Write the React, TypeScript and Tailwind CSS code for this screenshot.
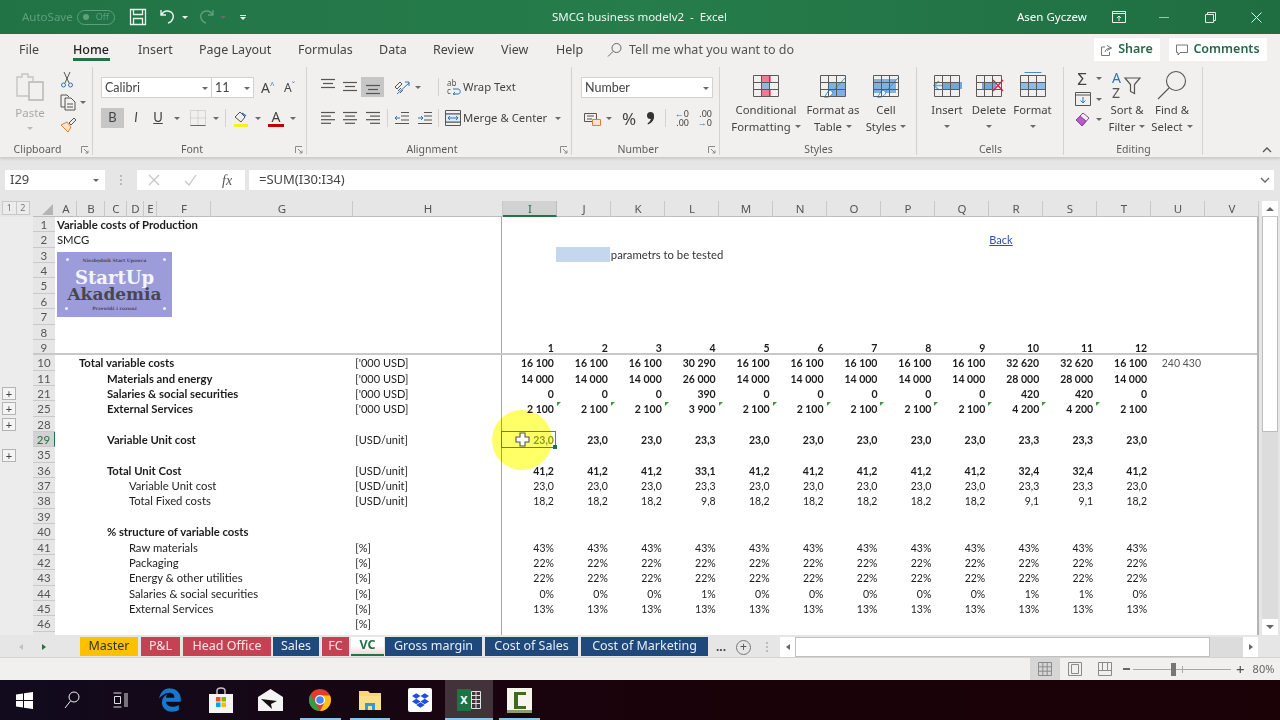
import clsx from "clsx"
import { FaEdgeLegacy, FaDropbox } from "react-icons/fa"

const ui = "font-['Noto_Sans',sans-serif]"
const calibri = "font-['Lato',sans-serif]"

function Caret({ className }: { className?: string }) {
  return (
    <span
      className={clsx(
        "inline-block h-0 w-0 border-x-[3px] border-t-[3px] border-x-transparent border-t-[#6a6a6a]",
        className
      )}
    />
  )
}

function Launcher() {
  return (
    <svg width="8" height="8" viewBox="0 0 8 8" className="absolute right-[4px] top-[6px]" fill="none" stroke="#8a8a8a">
      <path d="M.5 7V.5H7M3 3l4 4M4.5 7H7V4.5" />
    </svg>
  )
}

function Group({ className, label, launcher, labelPad, children }: { className: string; label: string; launcher?: boolean; labelPad?: string; children: React.ReactNode }) {
  return (
    <div className={clsx("relative flex flex-col", className)}>
      <div className="h-[75px]">{children}</div>
      <div className={clsx("relative flex h-[17px] items-center justify-center pt-[2px] text-[10.5px] text-[#5c5c5c]", labelPad)}>
        {label}
        {launcher && <Launcher />}
      </div>
      <div className="absolute bottom-[2px] right-0 top-[2px] w-px bg-[#d4d3d1]" />
    </div>
  )
}

function Lines({ w }: { w: number[] }) {
  return (
    <svg width="16" height="12" viewBox="0 0 16 12" stroke="#555" strokeWidth="1.2">
      {w.map((l, i) => (
        <path key={i} d={`M${(16 - l) / 2} ${1.5 + i * 4}h${l}`} />
      ))}
    </svg>
  )
}

function Align({ kind }: { kind: "left" | "center" | "right" }) {
  const ws = [14, 10, 14, 10]
  return (
    <svg width="16" height="14" viewBox="0 0 16 14" stroke="#555" strokeWidth="1.2">
      {ws.map((l, i) => {
        const x = kind === "left" ? 1 : kind === "right" ? 15 - l : (16 - l) / 2
        return <path key={i} d={`M${x} ${1.5 + i * 3.6}h${l}`} />
      })}
    </svg>
  )
}

function SheetGrid({ children }: { children?: React.ReactNode }) {
  return (
    <svg width="30" height="26" viewBox="0 0 30 26" fill="none">
      {children}
      <path d="M2.5 3.5h25v21h-25zM2.5 10.5h25M2.5 17.5h25M10.5 3.5v21M18.5 3.5v21" stroke="#5a5a5a" />
    </svg>
  )
}

function BigButton({ className, lines, caret, icon }: { className: string; lines: string[]; caret?: boolean; icon: React.ReactNode }) {
  return (
    <div className={clsx("flex flex-col items-center pt-[7px]", className)}>
      <div className="flex h-[26px] items-center">{icon}</div>
      <div className="mt-[3px] flex flex-col items-center whitespace-nowrap text-[11.3px] leading-[17px] text-[#444]">
        {lines.map((l, i) => (
          <span key={i} className="flex items-center gap-[4px]">
            {l}
            {caret && i === lines.length - 1 && <Caret />}
          </span>
        ))}
        {lines.length === 1 && <Caret className="mt-[7px]" />}
      </div>
    </div>
  )
}

function TitleBar() {
  return (
    <div className="relative flex h-[34px] items-center bg-gradient-to-r from-[#217346] via-[#267c4b] to-[#1f6e42] text-white">
      <span className="ml-[22px] w-[55px] shrink-0 text-[11.5px] text-[#5f9f7e]">AutoSave</span>
      <span className="flex h-[15px] w-[38px] shrink-0 items-center justify-between rounded-full border border-[#5f9f7e] px-[5px] text-[9px] text-[#5f9f7e]">
        <span className="h-[6px] w-[6px] rounded-full bg-[#5f9f7e]" />
        Off
      </span>
      <svg className="ml-[14px] shrink-0" width="18" height="18" viewBox="0 0 18 18" fill="none" stroke="#eaf3ee" strokeWidth="1.3">
        <path d="M1.5 1.5h15v15h-15zM4.5 1.5v5h9v-5M4.5 16.5v-6h9v6" />
      </svg>
      <svg className="ml-[12px] shrink-0" width="18" height="18" viewBox="0 0 18 18" fill="none" stroke="#eaf3ee" strokeWidth="1.4">
        <path d="M2 2v5h5M2.5 6.8C4 4 7 2.5 10 3.2c3.5.8 5 4 4 7-.7 2.2-2.5 4-5 5" />
      </svg>
      <Caret className="ml-[5px] border-t-[#eaf3ee]" />
      <svg className="ml-[9px] shrink-0" width="18" height="18" viewBox="0 0 18 18" fill="none" stroke="#5f9f7e" strokeWidth="1.4">
        <path d="M16 2v5h-5M15.5 6.8C14 4 11 2.5 8 3.2c-3.500.8-5 4-4 7 .7 2.200 2.500 4 5 5" />
      </svg>
      <Caret className="ml-[5px] border-t-[#5f9f7e]" />
      <span className="ml-[14px] flex flex-col items-center gap-[1px]">
        <span className="h-px w-[6px] bg-[#eaf3ee]" />
        <Caret className="border-t-[#eaf3ee]" />
      </span>
      <span className="ml-[306px] w-[180px] shrink-0 whitespace-pre text-[11.5px] text-[#eef6f1]">SMCG business modelv2  -  Excel</span>
      <span className="ml-[285px] w-[85px] shrink-0 text-[11.5px]">Asen Gyczew</span>
      <svg className="ml-[10px] shrink-0" width="14" height="12" viewBox="0 0 14 12" fill="none" stroke="#eaf3ee">
        <path d="M.5.5h13v11H.5zM.5 2.500h13M7 10V5M5 7l2-2 2 2" />
      </svg>
      <span className="ml-[33px] h-px w-[10px] shrink-0 bg-[#9cc5ae]" />
      <svg className="ml-[36px] shrink-0" width="11" height="11" viewBox="0 0 11 11" fill="none" stroke="#dcebe3">
        <path d="M.5 2.500h8v8h-8zM2.500 2.500v-2h8v8h-2" />
      </svg>
      <svg className="ml-[35px] shrink-0" width="11" height="11" viewBox="0 0 11 11" fill="none" stroke="#eaf3ee">
        <path d="M.5.5l10 10M10.500.5l-10 10" />
      </svg>
    </div>
  )
}

const tabs = [
  { t: "File", w: "w-[54px]" },
  { t: "Home", w: "w-[65px]" },
  { t: "Insert", w: "w-[61px]" },
  { t: "Page Layout", w: "w-[99px]" },
  { t: "Formulas", w: "w-[81px]" },
  { t: "Data", w: "w-[54px]" },
  { t: "Review", w: "w-[68px]" },
  { t: "View", w: "w-[55px]" },
  { t: "Help", w: "w-[52px]" },
]

function RibbonTabs() {
  return (
    <div className="flex h-[31px] items-center bg-[#f1f0ee] pl-[19px] text-[12.5px] text-[#444]">
      {tabs.map((x) => (
        <div key={x.t} className={clsx("relative flex h-full items-center pt-[1px]", x.w)}>
          <span className={x.t === "Home" ? "font-medium text-[#222]" : ""}>{x.t}</span>
          {x.t === "Home" && <span className="absolute bottom-[4px] left-0 h-[3px] w-[37px] bg-[#217346]" />}
        </div>
      ))}
      <svg width="16" height="16" viewBox="0 0 16 16" fill="none" stroke="#666" className="-ml-[1px]">
        <circle cx="9.5" cy="6" r="4.5" />
        <path d="M6.3 9.2L1 14.5" />
      </svg>
      <span className="ml-[6px] pt-[1px] text-[#555]">Tell me what you want to do</span>
      <div className="ml-auto mr-[13px] flex items-center gap-[9px] text-[12.5px] font-semibold text-[#25694a]">
        <span className="flex h-[23px] w-[66px] items-center justify-center gap-[5px] bg-white">
          <svg width="12" height="12" viewBox="0 0 12 12" fill="none" stroke="#777">
            <path d="M4 3H.5v8.500h8V8M6 1.500l4.500 2.500L6 6.500M10.500 4C7 4 4.500 5 4 8" />
          </svg>
          Share
        </span>
        <span className="flex h-[23px] w-[98px] items-center justify-center gap-[5px] bg-white">
          <svg width="12" height="12" viewBox="0 0 12 12" fill="none" stroke="#777">
            <path d="M.5 1h11v7.500H4L2 11V8.500H.5z" />
          </svg>
          Comments
        </span>
      </div>
    </div>
  )
}

function ClipboardGroup() {
  return (
    <Group className="w-[93px]" label="Clipboard" launcher labelPad="pr-[18px]">
      <div className="flex">
        <div className="flex w-[60px] flex-col items-center pt-[7px] text-[#a9a9a9]">
          <svg width="30" height="30" viewBox="0 0 30 30" fill="none" stroke="#c4c4c4" strokeWidth="1.4">
            <path d="M15 24H2V5h5V2h6v3h5v4" />
            <path d="M14 10h14v18H14z" fill="#f1f0ee" stroke="#b4b4b4" />
          </svg>
          <span className="mt-[2px] text-[11.5px]">Paste</span>
          <Caret className="mt-[6px] border-t-[#bbb]" />
        </div>
        <div className="flex flex-col pt-[3px]">
          <div className="flex h-[23px] items-center">
            <svg width="14" height="17" viewBox="0 0 14 17" fill="none" stroke="#555">
              <path d="M4 1l5 11M10 1L5 12" />
              <circle cx="3.500" cy="14" r="2" stroke="#2f75b5" />
              <circle cx="10.500" cy="14" r="2" stroke="#2f75b5" />
            </svg>
          </div>
          <div className="flex h-[23px] items-center gap-[4px]">
            <svg width="16" height="17" viewBox="0 0 16 17" fill="none" stroke="#555">
              <path d="M5 13H1V1h6l2 2" />
              <path d="M5 4h6l4 4v8H5zM7 10h6M7 13h6" />
            </svg>
            <Caret />
          </div>
          <div className="flex h-[22px] items-center">
            <svg width="17" height="16" viewBox="0 0 17 16" fill="none">
              <path d="M1 8l6-3 4 5-3 5z" fill="#fbe5d0" stroke="#e0812e" />
              <path d="M9 6l5-5 2 2-5 5z" stroke="#555" />
            </svg>
          </div>
        </div>
      </div>
    </Group>
  )
}

function FontGroup() {
  return (
    <Group className="w-[214px]" label="Font" launcher labelPad="pr-[16px]">
      <div className="pl-[8px] pt-[12px]">
        <div className="flex h-[21px] items-center">
          <div className={clsx("flex h-full w-[111px] items-center justify-between border border-[#d2d2d2] bg-white pl-[3px] pr-[3px] pt-px text-[12.5px] text-[#444]", calibri)}>
            Calibri <Caret />
          </div>
          <div className={clsx("-ml-px flex h-full w-[43px] items-center justify-between border border-[#d2d2d2] bg-white pl-[3px] pr-[3px] pt-px text-[12.5px] text-[#444]", calibri)}>
            11 <Caret />
          </div>
          <span className="ml-[7px] flex w-[23px] items-start text-[14px] leading-none text-[#444]">
            A<span className="text-[8px] text-[#2f75b5]">^</span>
          </span>
          <span className="flex items-start text-[12px] leading-none text-[#444]">
            A<span className="text-[8px] text-[#2f75b5]">ˇ</span>
          </span>
        </div>
        <div className="mt-[10px] flex h-[20px] items-center text-[13px] text-[#444]">
          <span className={clsx("flex h-full w-[23px] items-center justify-center bg-[#c6c6c6]", calibri)}>B</span>
          <span className={clsx("ml-[1px] flex w-[22px] justify-center italic", calibri)}>I</span>
          <span className={clsx("flex w-[22px] justify-center underline", calibri)}>U</span>
          <Caret className="ml-[5px]" />
          <svg className="ml-[10px]" width="16" height="16" viewBox="0 0 16 16" fill="none" stroke="#bbb" strokeDasharray="1 1">
            <path d="M.5.5h15v15H.5zM8 .5v15M.5 8h15" />
            <path d="M.5 15.500h15" stroke="#666" strokeDasharray="0" />
          </svg>
          <Caret className="ml-[7px]" />
          <span className="ml-[6px] h-[18px] w-px bg-[#d4d3d1]" />
          <svg className="ml-[7px]" width="16" height="17" viewBox="0 0 16 17" fill="none" stroke="#555">
            <path d="M2 7l5-5 5 5-4 5z" />
            <path d="M9 3l4 3" stroke="#2f75b5" strokeWidth="1.5" />
            <path d="M1 15.500h14" stroke="#f7f020" strokeWidth="3" />
          </svg>
          <Caret className="ml-[6px]" />
          <span className="ml-[7px] flex w-[16px] flex-col items-center text-[14px] leading-[14px]">
            A
            <span className="h-[3px] w-[16px] bg-[#c00000]" />
          </span>
          <Caret className="ml-[6px]" />
        </div>
      </div>
    </Group>
  )
}

function AlignmentGroup() {
  return (
    <Group className="w-[265px]" label="Alignment" launcher labelPad="pr-[15px]">
      <div className="pl-[9px] pt-[12px]">
        <div className="flex h-[20px] items-center">
          <span className="flex h-full w-[23px] items-start justify-center pt-[1px]"><Lines w={[14, 10, 14]} /></span>
          <span className="flex h-full w-[22px] items-center justify-center"><Lines w={[14, 10, 14]} /></span>
          <span className="flex h-full w-[23px] items-end justify-center bg-[#c6c6c6] pb-[1px]"><Lines w={[14, 10, 14]} /></span>
          <svg className="ml-[9px]" width="18" height="16" viewBox="0 0 18 16" fill="none" stroke="#555">
            <path d="M2 8l5-5 2 2-5 5zM5 12l3-3M7 14l3-3" />
            <path d="M4 15L16 4M12 3h4v4" stroke="#2f75b5" />
          </svg>
          <Caret className="ml-[4px]" />
          <span className="ml-[17px] h-[18px] w-px bg-[#d4d3d1]" />
          <span className="ml-[8px] flex w-[14px] shrink-0 flex-col text-[8px] leading-[8px] text-[#555]">
            <span>ab</span>
            <span className="flex items-center gap-[1px]">
              c
              <svg width="9" height="7" viewBox="0 0 9 7" fill="none" stroke="#2f75b5">
                <path d="M2 6h4c3 0 3-5 0-5H1M3 4L1 6l2 1" />
              </svg>
            </span>
          </span>
          <span className="ml-[2px] whitespace-nowrap text-[11.3px] text-[#444]">Wrap Text</span>
        </div>
        <div className="mt-[11px] flex h-[20px] items-center">
          <span className="flex w-[23px] justify-center"><Align kind="left" /></span>
          <span className="flex w-[22px] justify-center"><Align kind="center" /></span>
          <span className="flex w-[23px] justify-center"><Align kind="right" /></span>
          <span className="ml-[3px] h-[18px] w-px bg-[#d4d3d1]" />
          <svg className="ml-[6px]" width="16" height="14" viewBox="0 0 16 14" fill="none" stroke="#555">
            <path d="M7 1.500h8M7 5h8M7 9h8M1 12.500h14" />
            <path d="M6 7H1M3 5L1 7l2 2" stroke="#2f75b5" />
          </svg>
          <svg className="ml-[7px]" width="16" height="14" viewBox="0 0 16 14" fill="none" stroke="#555">
            <path d="M7 1.500h8M7 5h8M7 9h8M1 12.500h14" />
            <path d="M1 7h5M4 5l2 2-2 2" stroke="#2f75b5" />
          </svg>
          <span className="ml-[5px] h-[18px] w-px bg-[#d4d3d1]" />
          <svg className="ml-[6px]" width="16" height="16" viewBox="0 0 16 16" fill="none" stroke="#555">
            <path d="M.5.5h15v15H.5zM.5 4h15M.5 12h15" />
            <path d="M.5 4h15v8H.5z" fill="#dcebf7" />
            <path d="M3 8h10M5 6L3 8l2 2M11 6l2 2-2 2" stroke="#2f75b5" />
          </svg>
          <span className="ml-[2px] whitespace-nowrap text-[11.3px] text-[#444]">Merge &amp; Center</span>
          <Caret className="ml-[8px]" />
        </div>
      </div>
    </Group>
  )
}

function NumberGroup() {
  return (
    <Group className="w-[148px]" label="Number" launcher labelPad="pr-[16px]">
      <div className="pl-[9px] pt-[12px]">
        <div className={clsx("flex h-[21px] w-[132px] items-center justify-between border border-[#d2d2d2] bg-white px-[3px] pt-px text-[12.5px] text-[#444]", calibri)}>
          Number <Caret />
        </div>
        <div className="mt-[10px] flex h-[20px] items-center text-[#444]">
          <svg className="ml-[3px]" width="17" height="15" viewBox="0 0 17 15" fill="none" stroke="#555">
            <path d="M.5 2.500h12v8H.5zM3 5h7M3 8h5" />
            <path d="M8.500 8.500h8v6h-8z" fill="#fbe5d0" stroke="#e0812e" />
          </svg>
          <Caret className="ml-[5px]" />
          <span className="ml-[8px] w-[18px] text-center text-[17px] leading-none">%</span>
          <svg className="ml-[8px]" width="9" height="13" viewBox="0 0 9 13" fill="#333">
            <circle cx="4.500" cy="3.500" r="3.500" />
            <path d="M8 3.500C8.500 7.500 6 11 2 12.500L1.500 11.500C3.500 10 4.500 8.500 5 6.500z" />
          </svg>
          <span className="ml-[10px] h-[18px] w-px bg-[#d4d3d1]" />
          <span className="ml-[6px] flex w-[17px] flex-col items-end text-[9px] leading-[9px]">
            <span className="flex"><span className="text-[#2f75b5]">←</span>0</span>
            <span>.00</span>
          </span>
          <span className="ml-[6px] flex w-[17px] flex-col items-end text-[9px] leading-[9px]">
            <span>.00</span>
            <span className="flex"><span className="text-[#2f75b5]">→</span>0</span>
          </span>
        </div>
      </div>
    </Group>
  )
}

function StylesGroup() {
  return (
    <Group className="w-[197px]" label="Styles">
      <div className="flex pl-[3px]">
        <BigButton
          className="w-[86px]"
          lines={["Conditional", "Formatting"]}
          caret
          icon={
            <SheetGrid>
              <path d="M10 3h10v7H10zM18 17h-8v-7h8zM10 17h10v7H10z" fill="#ee7b93" />
              <path d="M10 10h8v7h-8z" fill="#8fb8e0" />
            </SheetGrid>
          }
        />
        <BigButton
          className="w-[48px]"
          lines={["Format as", "Table"]}
          caret
          icon={
            <SheetGrid>
              <path d="M10 10h18v14H10z" fill="#7fb0e2" />
              <path d="M28 5L15 19M6 25c4 1 8-1 9-5l-3-2c-3 1-3 5-6 7z" stroke="#3f8fd0" fill="#f5f5f5" />
            </SheetGrid>
          }
        />
        <BigButton
          className="w-[58px]"
          lines={["Cell", "Styles"]}
          caret
          icon={
            <SheetGrid>
              <path d="M3 7h22v14H3z" fill="#7fb0e2" />
              <path d="M28 5L15 19M6 25c4 1 8-1 9-5l-3-2c-3 1-3 5-6 7z" stroke="#3f8fd0" fill="#f5f5f5" />
            </SheetGrid>
          }
        />
      </div>
    </Group>
  )
}

function CellsGroup() {
  return (
    <Group className="w-[147px]" label="Cells">
      <div className="flex">
        <BigButton
          className="w-[60px]"
          lines={["Insert"]}
          icon={
            <SheetGrid>
              <path d="M10 10h20v7H10z" fill="#6fa8dc" />
              <path d="M12 13.500H3M7 9l-5 4.500L7 18" stroke="#6fa8dc" strokeWidth="1.6" />
            </SheetGrid>
          }
        />
        <BigButton
          className="w-[24px]"
          lines={["Delete"]}
          icon={
            <SheetGrid>
              <path d="M8 10h14v7H8z" fill="#6fa8dc" />
              <path d="M19 8l10 11M29 8L19 19" stroke="#d9273e" strokeWidth="1.4" />
            </SheetGrid>
          }
        />
        <BigButton
          className="w-[63px]"
          lines={["Format"]}
          icon={
            <SheetGrid>
              <path d="M3 10h24v7H3z" fill="#8cbbe6" />
              <path d="M7 .5h16M7 0v1M23 0v1" stroke="#3f8fd0" />
            </SheetGrid>
          }
        />
      </div>
    </Group>
  )
}

function EditingGroup() {
  return (
    <Group className="w-[139px]" label="Editing">
      <div className="flex">
        <div className="flex w-[44px] flex-col pl-[11px] pt-[3px] text-[#444]">
          <div className="flex h-[21px] items-center gap-[7px]">
            <span className="w-[14px] text-center text-[17px] leading-none">Σ</span>
            <Caret />
          </div>
          <div className="flex h-[20px] items-center gap-[4px]">
            <svg width="17" height="15" viewBox="0 0 17 15" fill="none" stroke="#555">
              <path d="M.5.5h15v13H.5zM.5 3h15" />
              <path d="M8 5v6M5.500 8.500L8 11l2.500-2.500" stroke="#2f75b5" />
            </svg>
            <Caret />
          </div>
          <div className="flex h-[20px] items-center gap-[4px]">
            <svg width="17" height="15" viewBox="0 0 17 15" fill="none" stroke="#8e3ea8">
              <path d="M1 8l7-7 6 5-7 8z" />
              <path d="M1 8l4-4 6 5-4 5z" fill="#b45cc9" />
            </svg>
            <Caret />
          </div>
        </div>
        <div className="w-[38px]">
          <BigButton
            className="w-full"
            lines={["Sort &", "Filter"]}
            caret
            icon={
              <div className="relative h-[30px] w-[32px]">
                <span className="absolute left-[1px] top-0 text-[14px] leading-[15px] text-[#2f75b5]">A</span>
                <span className="absolute left-[1px] top-[15px] text-[14px] leading-[15px] text-[#555]">Z</span>
                <svg className="absolute inset-0" width="32" height="30" viewBox="0 0 32 30" fill="none">
                  <path d="M14 8h15l-5.500 6.500v9l-4-2v-7z" stroke="#555" strokeWidth="1.2" />
                </svg>
              </div>
            }
          />
        </div>
        <div className="w-[52px]">
          <BigButton
            className="w-full"
            lines={["Find &", "Select"]}
            caret
            icon={
              <svg width="32" height="30" viewBox="0 0 32 30" fill="none" stroke="#555" strokeWidth="1.1">
                <circle cx="20" cy="11" r="9.500" />
                <path d="M13 18L2 29" />
              </svg>
            }
          />
        </div>
      </div>
    </Group>
  )
}

function Ribbon() {
  return (
    <div className="flex h-[92px] bg-[#f1f0ee] shadow-[0_2px_3px_rgba(0,0,0,0.13)]">
      <ClipboardGroup />
      <FontGroup />
      <AlignmentGroup />
      <NumberGroup />
      <StylesGroup />
      <CellsGroup />
      <EditingGroup />
      <div className="flex flex-1 items-end justify-end pb-[4px] pr-[8px]">
        <svg width="10" height="6" viewBox="0 0 10 6" fill="none" stroke="#555" strokeWidth="1.3">
          <path d="M1 5l4-4 4 4" />
        </svg>
      </div>
    </div>
  )
}

function FormulaBar() {
  return (
    <div className="mt-[13px] flex h-[20px] items-stretch pl-[5px] pr-[6px] text-[13px] text-[#444]">
      <div className="flex w-[100px] items-center justify-between bg-white pl-[5px] pr-[6px]">
        I29 <Caret />
      </div>
      <div className="flex w-[32px] items-center justify-center">
        <span className="flex flex-col gap-[2px]">
          <span className="h-[2px] w-[2px] bg-[#bbb]" />
          <span className="h-[2px] w-[2px] bg-[#bbb]" />
          <span className="h-[2px] w-[2px] bg-[#bbb]" />
        </span>
      </div>
      <div className="flex w-[108px] items-center bg-white pl-[11px]">
        <svg width="12" height="12" viewBox="0 0 12 12" stroke="#c8c8c8" strokeWidth="1.300" fill="none">
          <path d="M1 1l10 10M11 1L1 11" />
        </svg>
        <svg className="ml-[24px]" width="13" height="12" viewBox="0 0 13 12" stroke="#c8c8c8" strokeWidth="1.300" fill="none">
          <path d="M1 7l4 4 7-10" />
        </svg>
        <span className="ml-[25px] font-['Liberation_Serif',serif] text-[14px] italic text-[#555]">fx</span>
      </div>
      <div className="ml-[4px] flex flex-1 items-center justify-between bg-white pl-[10px] pr-[4px]">
        =SUM(I30:I34)
        <svg width="10" height="6" viewBox="0 0 10 6" fill="none" stroke="#666" strokeWidth="1.3">
          <path d="M1 1l4 4 4-4" />
        </svg>
      </div>
    </div>
  )
}

const letters = [
  { l: "A", w: "w-[22px]" },
  { l: "B", w: "w-[28px]" },
  { l: "C", w: "w-[22px]" },
  { l: "D", w: "w-[17px]" },
  { l: "E", w: "w-[13px]" },
  { l: "F", w: "w-[54px]" },
  { l: "G", w: "w-[142px]" },
  { l: "H", w: "w-[150px]" },
  ...["I", "J", "K", "L", "M", "N", "O", "P", "Q", "R", "S", "T", "U", "V"].map((l) => ({ l, w: "w-[54px]" })),
]

type Row = {
  n: number
  label?: string
  indent?: "a" | "b" | "c"
  bold?: boolean
  unit?: string
  values?: string[]
  plus?: boolean
}

const repeat = (a: string, b: string, c: string) => [a, a, a, b, a, a, a, a, a, c, c, a]

const rows: Row[] = [
  { n: 1, label: "Variable costs of Production", indent: "a", bold: true },
  { n: 2, label: "SMCG", indent: "a" },
  { n: 3 },
  { n: 4 },
  { n: 5 },
  { n: 6 },
  { n: 7 },
  { n: 8 },
  { n: 9, bold: true, values: ["1", "2", "3", "4", "5", "6", "7", "8", "9", "10", "11", "12"] },
  { n: 10, label: "Total variable costs", indent: "b", bold: true, unit: "['000 USD]", values: repeat("16 100", "30 290", "32 620") },
  { n: 11, label: "Materials and energy", indent: "c", bold: true, unit: "['000 USD]", values: repeat("14 000", "26 000", "28 000") },
  { n: 21, label: "Salaries & social securities", indent: "c", bold: true, unit: "['000 USD]", values: repeat("0", "390", "420"), plus: true },
  { n: 25, label: "External Services", indent: "c", bold: true, unit: "['000 USD]", values: repeat("2 100", "3 900", "4 200"), plus: true },
  { n: 28, plus: true },
  { n: 29, label: "Variable Unit cost", indent: "c", bold: true, unit: "[USD/unit]", values: repeat("23,0", "23,3", "23,3") },
  { n: 35, plus: true },
  { n: 36, label: "Total Unit Cost", indent: "c", bold: true, unit: "[USD/unit]", values: repeat("41,2", "33,1", "32,4") },
  { n: 37, label: "Variable Unit cost", unit: "[USD/unit]", values: repeat("23,0", "23,3", "23,3") },
  { n: 38, label: "Total Fixed costs", unit: "[USD/unit]", values: repeat("18,2", "9,8", "9,1") },
  { n: 39 },
  { n: 40, label: "% structure of variable costs", indent: "c", bold: true },
  { n: 41, label: "Raw materials", unit: "[%]", values: repeat("43%", "43%", "43%") },
  { n: 42, label: "Packaging", unit: "[%]", values: repeat("22%", "22%", "22%") },
  { n: 43, label: "Energy & other utilities", unit: "[%]", values: repeat("22%", "22%", "22%") },
  { n: 44, label: "Salaries & social securities", unit: "[%]", values: repeat("0%", "1%", "1%") },
  { n: 45, label: "External Services", unit: "[%]", values: repeat("13%", "13%", "13%") },
  { n: 46, unit: "[%]" },
  { n: 47 },
]

function ColumnHeaders() {
  return (
    <div className="mt-[11px] flex h-[16px]">
      <div className="w-[33px] pl-[2px]">
        <div className="flex h-[14px] w-[28px] border border-[#c8c8c8] bg-[#ececec] text-[9px] leading-[12px] text-[#777]">
          <span className="flex-1 text-center">1</span>
          <span className="flex-1 border-l border-[#c8c8c8] text-center">2</span>
        </div>
      </div>
      <div className="flex w-[22px] items-end justify-end border-b border-[#bdbdbd] pb-[1px] pr-[2px]">
        <span className="h-0 w-0 border-b-[11px] border-l-[11px] border-b-[#b4b4b4] border-l-transparent" />
      </div>
      {letters.map((c) => (
        <div
          key={c.l}
          className={clsx(
            "flex items-center justify-center border-r pl-px pt-px text-[11.5px]",
            c.w,
            c.l === "I"
              ? "border-[#bdbdbd] border-b-2 border-b-[#217346] bg-[#d2d2d2] text-[#217346]"
              : "border-[#c8c8c8] border-b border-b-[#bdbdbd] text-[#555]"
          )}
        >
          {c.l}
        </div>
      ))}
    </div>
  )
}

function Selection() {
  return (
    <>
      <div className="absolute -left-[10px] -top-[22px] h-[60px] w-[60px] rounded-full bg-[#ffff66] mix-blend-multiply" />
      <div className="absolute -bottom-px -left-px -top-[1px] right-0 border border-[#4f8f3a]" />
      <div className="absolute -bottom-[2px] -right-[1px] h-[4px] w-[4px] bg-[#217346]" />
      <svg className="absolute left-[13px] top-0" width="15" height="15" viewBox="0 0 15 15" fill="#fff" stroke="#555" strokeWidth="1.100">
        <path d="M5 1h5v4h4v5h-4v4H5v-4H1V5h4z" />
      </svg>
    </>
  )
}

function SheetRow({ row }: { row: Row }) {
  const labelPad = row.indent === "a" ? "pl-[2px]" : row.indent === "b" ? "pl-[24px]" : row.indent === "c" ? "pl-[52px]" : "pl-[74px]"
  return (
    <div className={clsx("flex h-[15.36px] text-[10.5px] leading-[16px] text-[#1c1c1c]", calibri)}>
      <div className="flex w-[33px] items-center bg-[#ececec] pl-[2px]">
        {row.plus && (
          <span className="flex h-[13px] w-[14px] items-center justify-center border border-[#b4b4b4] bg-[#f4f4f4] text-[11px] leading-none text-[#444]">+</span>
        )}
      </div>
      <div
        className={clsx(
          "w-[22px] border-b border-[#c9c9c9] text-center text-[11.5px] leading-[15.5px]",
          row.n === 29 ? "border-r border-r-[#217346] bg-[#d2d2d2] text-[#217346]" : "bg-[#e6e6e6] text-[#555]"
        )}
      >
        {row.n !== 47 && row.n}
      </div>
      <div className={clsx("w-[297px] whitespace-nowrap text-[11.3px]", labelPad, row.bold && "font-bold")}>{row.label}</div>
      <div className="w-[150px] pl-[4px] text-[11px]">{row.unit}</div>
      <div className="flex w-[756px] border-l border-[#a6a6a6]">
        {Array.from({ length: 14 }).map((_, i) => {
          const v = row.values?.[i]
          const selected = row.n === 29 && i === 0
          return (
            <div key={i} className={clsx("relative w-[54px] pr-[2px] text-right", row.bold && "font-bold")}>
              {selected && <Selection />}
              <span className={clsx("relative", selected && "text-[#8f9a1c]")}>{v}</span>
              {row.n === 25 && i < 11 && (
                <span className="absolute -right-[5px] top-[1px] h-0 w-0 border-r-[4px] border-t-[4px] border-r-transparent border-t-[#3a9a3a]" />
              )}
              {row.n === 2 && i === 9 && <span className="absolute left-[2px] text-[11px] font-normal text-[#2b4fb5] underline">Back</span>}
              {row.n === 3 && i === 1 && <span className="absolute inset-x-0 -top-px bottom-px bg-[#c5d7ee]" />}
              {row.n === 3 && i === 2 && <span className="absolute left-[1px] -top-px whitespace-nowrap text-[11.3px] text-[#333]">parametrs to be tested</span>}
              {row.n === 10 && i === 12 && <span className="absolute right-[2px] whitespace-nowrap font-normal text-[#555]">240 430</span>}
            </div>
          )
        })}
      </div>
    </div>
  )
}

function Logo() {
  const dot = "absolute h-[3px] w-[3px] rounded-full bg-[#eeeefa]"
  return (
    <div className="absolute left-[57px] top-[35px] flex h-[65px] w-[115px] flex-col items-center bg-[#9c9cda]">
      <span className={clsx(dot, "left-[9px] top-[6px]")} />
      <span className={clsx(dot, "right-[6px] top-[6px]")} />
      <span className={clsx(dot, "bottom-[7px] left-[8px]")} />
      <span className={clsx(dot, "bottom-[7px] right-[6px]")} />
      <span className="mt-[5px] font-['DejaVu_Serif',serif] text-[4.500px] font-bold leading-[7px] text-[#4a4a5e]">Niezbędnik Start Upowca</span>
      <span className="mt-[5px] font-['DejaVu_Serif',serif] text-[18px] font-bold leading-[18px] text-[#f4f4fb]">StartUp</span>
      <span className="font-['DejaVu_Serif',serif] text-[17px] font-bold leading-[15px] text-[#47474f]">Akademia</span>
      <span className="mt-[3px] font-['DejaVu_Serif',serif] text-[4.500px] font-bold leading-[7px] text-[#4a4a5e]">Przewidź i rozwaź</span>
    </div>
  )
}

function Sheet() {
  return (
    <div className="flex">
      <div className="w-[1259px]">
        <ColumnHeaders />
        <div className="relative h-[418px] overflow-hidden border-r-2 border-[#b4b4b4] bg-white">
          {rows.map((r) => (
            <SheetRow key={r.n} row={r} />
          ))}
          <Logo />
          <div className="absolute left-[33px] right-0 top-[136px] h-[2px] bg-[#c8c8c8]" />
        </div>
      </div>
      <div className="ml-[3px] mt-[11px] flex w-[16px] flex-col">
        <div className="flex h-[16px] items-center justify-center border-b border-[#c8c8c8] bg-white">
          <span className="h-0 w-0 border-x-[4px] border-b-[4px] border-x-transparent border-b-[#666]" />
        </div>
        <div className="h-[215px] border border-t-0 border-[#bdbdbd] bg-white" />
        <div className="flex-1 bg-[#dcdcdc]" />
        <div className="flex h-[16px] items-center justify-center bg-white">
          <span className="h-0 w-0 border-x-[4px] border-t-[4px] border-x-transparent border-t-[#666]" />
        </div>
      </div>
    </div>
  )
}

const sheetTabs = [
  { t: "Master", c: "w-[58px] mr-[3px] bg-[#ffc000] text-[#333]" },
  { t: "P&L", c: "w-[39px] mr-[3px] bg-[#c34353] text-[#f7e6e8]" },
  { t: "Head Office", c: "w-[88px] mr-[2px] bg-[#c34353] text-[#f7e6e8]" },
  { t: "Sales", c: "w-[46px] mr-[3px] bg-[#1f497d] text-[#e6edf5]" },
  { t: "FC", c: "w-[27px] mr-[2px] bg-[#c34353] text-[#f7e6e8]" },
  { t: "VC", c: "w-[33px] mr-[1px] bg-gradient-to-b from-white via-white to-[#f3d6da] border-b-2 border-[#217346] font-bold text-[#217346]" },
  { t: "Gross margin", c: "w-[97px] mr-[3px] bg-[#1f497d] text-[#e6edf5]" },
  { t: "Cost of Sales", c: "w-[93px] mr-[3px] bg-[#1f497d] text-[#e6edf5]" },
  { t: "Cost of Marketing", c: "w-[127px] bg-[#1f497d] text-[#e6edf5]" },
]

function SheetTabs() {
  return (
    <div className="flex h-[23px] items-start border-b border-[#d2d2d2] bg-[#e6e6e6] pt-[2px]">
      <div className="flex h-[19px] w-[80px] items-center pl-[19px]">
        <span className="h-0 w-0 border-y-[3px] border-r-[4px] border-y-transparent border-r-[#c0c0c0]" />
        <span className="ml-[19px] h-0 w-0 border-y-[3px] border-l-[4px] border-y-transparent border-l-[#217346]" />
      </div>
      {sheetTabs.map((s) => (
        <div key={s.t} className={clsx("flex h-[19px] items-center justify-center whitespace-nowrap text-[12.5px]", s.c)}>
          {s.t}
        </div>
      ))}
      <span className="ml-[8px] w-[12px] text-[12px] font-bold leading-[19px] text-[#444]">...</span>
      <span className="ml-[8px] flex h-[15px] w-[15px] items-center justify-center self-center rounded-full border border-[#777] text-[12px] leading-none text-[#555]">+</span>
      <span className="ml-[15px] mr-[12px] flex flex-col gap-[2px] self-center">
        <span className="h-[2px] w-[2px] bg-[#bbb]" />
        <span className="h-[2px] w-[2px] bg-[#bbb]" />
        <span className="h-[2px] w-[2px] bg-[#bbb]" />
      </span>
      <div className="flex h-[20px] w-[15px] items-center justify-center bg-white">
        <span className="h-0 w-0 border-y-[3px] border-r-[4px] border-y-transparent border-r-[#666]" />
      </div>
      <div className="h-[20px] w-[415px] border border-[#c0c0c0] bg-white" />
      <div className="h-[20px] w-[33px] bg-[#dcdcdc]" />
      <div className="flex h-[20px] w-[15px] items-center justify-center bg-white">
        <span className="h-0 w-0 border-y-[3px] border-l-[4px] border-y-transparent border-l-[#666]" />
      </div>
    </div>
  )
}

function StatusBar() {
  return (
    <div className="flex h-[22px] items-center bg-[#f1f0ee] pl-[1030px] text-[11px] text-[#666]">
      <div className="flex h-full w-[30px] items-center justify-center bg-[#d6d6d6]">
        <svg width="14" height="14" viewBox="0 0 14 14" fill="none" stroke="#8a8a8a">
          <path d="M.5.5h13v13H.5zM.5 4.800h13M.5 9.200h13M4.800.5v13M9.200.5v13" />
        </svg>
      </div>
      <svg className="ml-[8px]" width="14" height="14" viewBox="0 0 14 14" fill="none" stroke="#8a8a8a">
        <path d="M.5.5h13v13H.5zM3.500 2.500h7v9h-7z" />
      </svg>
      <svg className="ml-[16px]" width="14" height="14" viewBox="0 0 14 14" fill="none" stroke="#8a8a8a">
        <path d="M.5.5h13v13H.5zM.5 8.500h13M4.500.5v8M9.500.5v8" />
      </svg>
      <span className="ml-[11px] h-[2px] w-[7px] bg-[#666]" />
      <div className="relative ml-[3px] h-px w-[98px] bg-[#a8a8a8]">
        <span className="absolute -top-[6px] left-[38px] h-[13px] w-[5px] bg-[#777]" />
        <span className="absolute -top-[3px] left-[49px] h-[7px] w-px bg-[#a8a8a8]" />
      </div>
      <span className="ml-[5px] text-[15px] font-medium leading-none text-[#555]">+</span>
      <span className="ml-[8px]">80%</span>
    </div>
  )
}

function Taskbar() {
  return (
    <div className="flex h-[40px] items-center bg-gradient-to-r from-[#110b1e] via-[#1a020a] to-[#1a0207]">
      <div className="flex h-full w-[48px] items-center justify-center">
        <svg width="17" height="17" viewBox="0 0 17 17" fill="#fff">
          <path d="M0 2.400l7-1v6.600H0zM8 1.200L17 0v8H8zM0 9h7v6.600l-7-1zM8 9h9v8l-9-1.200z" />
        </svg>
      </div>
      <div className="flex h-full w-[48px] items-center justify-center">
        <svg width="16" height="18" viewBox="0 0 16 18" fill="none" stroke="#eee">
          <circle cx="10" cy="6" r="5" />
          <path d="M6.500 10L1 17" />
        </svg>
      </div>
      <div className="flex h-full w-[48px] items-center justify-center">
        <svg width="16" height="16" viewBox="0 0 16 16" fill="none" stroke="#ddd">
          <path d="M1.500 1h8M1.500 15h8M2.500 4.500h6v7h-6zM13 1v14M15 1v14" />
        </svg>
      </div>
      <div className="flex h-full w-[52px] items-center justify-center">
        <FaEdgeLegacy className="text-[24px] text-[#1379d0]" />
      </div>
      <div className="flex h-full w-[49px] items-center justify-center">
        <svg width="24" height="26" viewBox="0 0 24 26">
          <path d="M8 7V4c0-4 8-4 8 0v3" fill="none" stroke="#c9bfca" strokeWidth="1.500" />
          <path d="M0 7h24v19H0z" fill="#f4f4f4" />
          <path d="M7 10h4.500v4.500H7z" fill="#f25022" />
          <path d="M12.500 10H17v4.500h-4.500z" fill="#7fba00" />
          <path d="M7 15.500h4.500V20H7z" fill="#00a4ef" />
          <path d="M12.500 15.500H17V20h-4.500z" fill="#ffb900" />
        </svg>
      </div>
      <div className="flex h-full w-[50px] items-center justify-center">
        <svg width="25" height="22" viewBox="0 0 25 22">
          <path d="M0 8L12.500 0 25 8v14H0z" fill="#f4f4f4" />
          <path d="M3 10l16 2-6 3 1 5z" fill="#111" />
        </svg>
      </div>
      <div className="relative flex h-full w-[50px] items-center justify-center">
        <svg width="22" height="22" viewBox="0 0 22 22">
          <circle cx="11" cy="11" r="11" fill="#e33b2e" />
          <path d="M11 22A11 11 0 0 1 1.500 5.500L7 15z" fill="#2f9e44" />
          <path d="M11 22A11 11 0 0 0 21 6.500H11l4 8z" fill="#f9c116" />
          <circle cx="11" cy="11" r="5" fill="#fff" />
          <circle cx="11" cy="11" r="3.800" fill="#4285f4" />
        </svg>
        <span className="absolute bottom-0 left-[5px] right-[4px] h-[2px] bg-[#8fc2ea]" />
      </div>
      <div className="relative flex h-full w-[50px] items-center justify-center">
        <svg width="22" height="20" viewBox="0 0 22 20">
          <path d="M0 1h9l2 2h11v17H0z" fill="#f7d774" />
          <path d="M0 6h22v14H0z" fill="#fbe08a" />
          <path d="M6 13h10v7h-3v-4H9v4H6z" fill="#2d9cdb" />
        </svg>
        <span className="absolute bottom-0 left-[5px] right-[5px] h-[2px] bg-[#8fc2ea]" />
      </div>
      <div className="flex h-full w-[50px] items-center justify-center">
        <span className="flex h-[24px] w-[24px] items-center justify-center rounded-[2px] bg-white">
          <FaDropbox className="text-[17px] text-[#1f4fd8]" />
        </span>
      </div>
      <div className="relative flex h-full w-[48px] items-center justify-center bg-[#42323a]">
        <span className="flex h-[24px] w-[24px] items-center">
          <span className="z-10 flex h-[22px] w-[14px] items-center justify-center bg-[#1f7244] text-[11px] font-bold text-white">X</span>
          <svg width="10" height="18" viewBox="0 0 10 18" fill="none" stroke="#d8e8df">
            <path d="M.5.5h9v17h-9zM.5 4.500h9M.5 8.500h9M.5 12.500h9M5 .5v17" />
          </svg>
        </span>
        <span className="absolute inset-x-0 bottom-0 h-[2px] bg-[#8fc2ea]" />
      </div>
      <div className="relative ml-[1px] flex h-full w-[50px] items-center justify-center">
        <svg width="25" height="25" viewBox="0 0 25 25">
          <path d="M0 0h25v25H0z" fill="#f6f6ee" />
          <path d="M7 4h12v3h-8v11h8v3H7z" fill="#3f6a1f" />
          <path d="M0 22h25v3H0z" fill="#8e9b6a" />
        </svg>
        <span className="absolute bottom-0 left-[5px] right-[4px] h-[2px] bg-[#8fc2ea]" />
      </div>
    </div>
  )
}

export default function App() {
  return (
    <div className={clsx("flex h-[720px] w-[1280px] flex-col overflow-hidden bg-[#e6e6e6]", ui)}>
      <TitleBar />
      <RibbonTabs />
      <Ribbon />
      <FormulaBar />
      <Sheet />
      <SheetTabs />
      <StatusBar />
      <Taskbar />
    </div>
  )
}
